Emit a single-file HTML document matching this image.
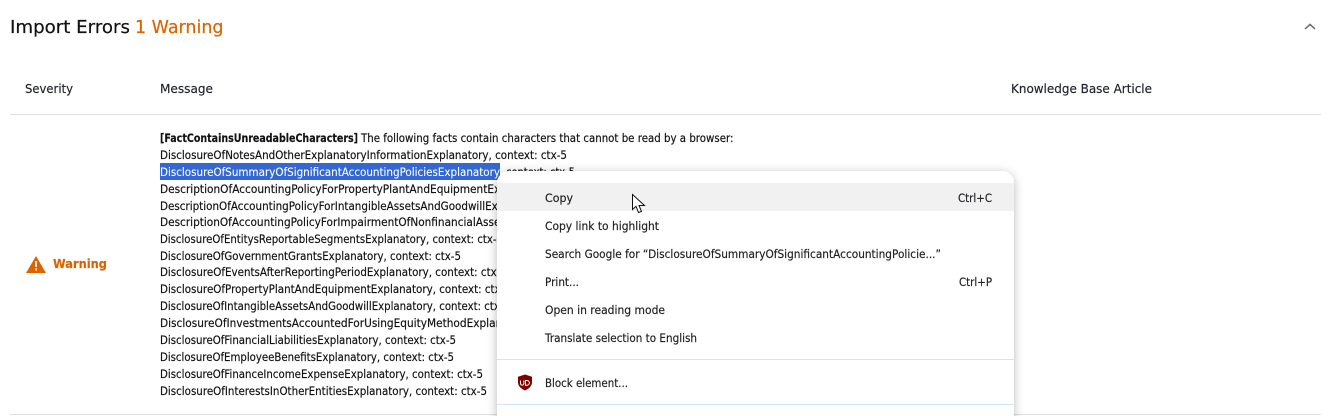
<!DOCTYPE html>
<html><head><meta charset="utf-8"><style>
html,body{margin:0;padding:0;background:#fff;width:1332px;height:416px;overflow:hidden}
svg{display:block}
text{font-family:"DejaVu Sans","Liberation Sans",sans-serif;fill:#111114;stroke:#111114;stroke-width:.18px}
.m{font-size:11.6px}
.h{font-size:12.6px;fill:#1f232b;stroke:#1f232b}
.c{font-size:11.6px;fill:#222226;stroke:#222226}
.o{fill:#dc6300;stroke:#dc6300}
.w{fill:#fff;stroke:#fff;stroke-width:.1px}
</style></head><body>
<svg width="1332" height="416" viewBox="0 0 1332 416" xmlns="http://www.w3.org/2000/svg">
<defs>
<filter id="s" x="-10%" y="-10%" width="120%" height="120%"><feDropShadow dx="0" dy="2" stdDeviation="5" flood-color="#000" flood-opacity=".28"/></filter>
</defs>
<text x="10" y="33" font-size="17.7" textLength="120" lengthAdjust="spacingAndGlyphs">Import Errors</text>
<text class="o" x="135" y="33" font-size="17.7" textLength="88.500" lengthAdjust="spacingAndGlyphs">1 Warning</text>
<path d="M1305 29l5-4.600 5 4.600" fill="none" stroke="#6b6b6b" stroke-width="1.500"/>
<text class="h" x="25" y="93" textLength="48" lengthAdjust="spacingAndGlyphs">Severity</text>
<text class="h" x="160" y="93" textLength="53" lengthAdjust="spacingAndGlyphs">Message</text>
<text class="h" x="1011" y="93" textLength="141" lengthAdjust="spacingAndGlyphs">Knowledge Base Article</text>
<rect x="10" y="114" width="1311" height="1" fill="#e0e0e0"/>
<rect x="10" y="414" width="1311" height="1" fill="#e0e0e0"/>
<path d="M36 256L46 273H26Z" fill="#dc6300"/>
<rect x="35.200" y="261" width="1.700" height="6" fill="#fff"/><rect x="35.200" y="268.500" width="1.700" height="2" fill="#fff"/>
<text class="o" x="53" y="268" font-size="12.600" font-weight="bold" textLength="54" lengthAdjust="spacingAndGlyphs">Warning</text>
<text class="m" x="160" y="142" font-weight="bold" textLength="198" lengthAdjust="spacingAndGlyphs">[FactContainsUnreadableCharacters]</text>
<text class="m" x="361" y="142" textLength="372.500" lengthAdjust="spacingAndGlyphs">The following facts contain characters that cannot be read by a browser:</text>
<text class="m" x="160" y="159" textLength="407" lengthAdjust="spacingAndGlyphs">DisclosureOfNotesAndOtherExplanatoryInformationExplanatory, context: ctx-5</text>
<rect x="160" y="163" width="340" height="17" fill="#3367d1"/>
<text class="m w" x="160" y="176" textLength="340" lengthAdjust="spacingAndGlyphs">DisclosureOfSummaryOfSignificantAccountingPoliciesExplanatory</text>
<text class="m" x="506" y="176" textLength="69" lengthAdjust="spacingAndGlyphs">context: ctx-5</text>
<text class="m" x="160" y="193" textLength="471" lengthAdjust="spacingAndGlyphs">DescriptionOfAccountingPolicyForPropertyPlantAndEquipmentExplanatory, context: ctx-5</text>
<text class="m" x="160" y="210" textLength="466" lengthAdjust="spacingAndGlyphs">DescriptionOfAccountingPolicyForIntangibleAssetsAndGoodwillExplanatory, context: ctx-5</text>
<text class="m" x="160" y="226" textLength="493" lengthAdjust="spacingAndGlyphs">DescriptionOfAccountingPolicyForImpairmentOfNonfinancialAssetsExplanatory, context: ctx-5</text>
<text class="m" x="160" y="243" textLength="343" lengthAdjust="spacingAndGlyphs">DisclosureOfEntitysReportableSegmentsExplanatory, context: ctx-5</text>
<text class="m" x="160" y="260" textLength="301" lengthAdjust="spacingAndGlyphs">DisclosureOfGovernmentGrantsExplanatory, context: ctx-5</text>
<text class="m" x="160" y="276" textLength="347" lengthAdjust="spacingAndGlyphs">DisclosureOfEventsAfterReportingPeriodExplanatory, context: ctx-5</text>
<text class="m" x="160" y="293" textLength="351" lengthAdjust="spacingAndGlyphs">DisclosureOfPropertyPlantAndEquipmentExplanatory, context: ctx-5</text>
<text class="m" x="160" y="310" textLength="350" lengthAdjust="spacingAndGlyphs">DisclosureOfIntangibleAssetsAndGoodwillExplanatory, context: ctx-5</text>
<text class="m" x="160" y="327" textLength="450" lengthAdjust="spacingAndGlyphs">DisclosureOfInvestmentsAccountedForUsingEquityMethodExplanatory, context: ctx-5</text>
<text class="m" x="160" y="344" textLength="296" lengthAdjust="spacingAndGlyphs">DisclosureOfFinancialLiabilitiesExplanatory, context: ctx-5</text>
<text class="m" x="160" y="361" textLength="294" lengthAdjust="spacingAndGlyphs">DisclosureOfEmployeeBenefitsExplanatory, context: ctx-5</text>
<text class="m" x="160" y="378" textLength="323" lengthAdjust="spacingAndGlyphs">DisclosureOfFinanceIncomeExpenseExplanatory, context: ctx-5</text>
<text class="m" x="160" y="395" textLength="327" lengthAdjust="spacingAndGlyphs">DisclosureOfInterestsInOtherEntitiesExplanatory, context: ctx-5</text>
<path d="M497 430V183a12 12 0 0 1 12-12H1002a12 12 0 0 1 12 12V430Z" fill="#fff" filter="url(#s)"/>
<rect x="497" y="183" width="517" height="28" fill="#f1f1f1"/>
<text class="c" x="545" y="202" textLength="28" lengthAdjust="spacingAndGlyphs">Copy</text>
<text class="c" x="958" y="202" textLength="34" lengthAdjust="spacingAndGlyphs">Ctrl+C</text>
<text class="c" x="545" y="230" textLength="114" lengthAdjust="spacingAndGlyphs">Copy link to highlight</text>
<text class="c" x="545" y="258" textLength="396" lengthAdjust="spacingAndGlyphs">Search Google for “DisclosureOfSummaryOfSignificantAccountingPolicie...”</text>
<text class="c" x="545" y="286" textLength="34" lengthAdjust="spacingAndGlyphs">Print...</text>
<text class="c" x="959" y="286" textLength="33" lengthAdjust="spacingAndGlyphs">Ctrl+P</text>
<text class="c" x="545" y="314" textLength="120" lengthAdjust="spacingAndGlyphs">Open in reading mode</text>
<text class="c" x="545" y="342" textLength="152" lengthAdjust="spacingAndGlyphs">Translate selection to English</text>
<rect x="497" y="359" width="517" height="1" fill="#d3e3fd"/>
<rect x="497" y="404" width="517" height="1" fill="#d3e3fd"/>
<path d="M525 374.500L532 376.800V382C532 386 529 388.800 525 390.500C521 388.800 518 386 518 382V376.800Z" fill="#800000"/>
<path d="M520.500 380.500V383.500a1.700 1.700 0 0 0 3.400 0V380.500M525.500 380.500V385.200H527a2.300 2.300 0 0 0 0-4.700Z" fill="none" stroke="#fff" stroke-width="1"/>
<text class="c" x="545" y="387" textLength="83" lengthAdjust="spacingAndGlyphs">Block element...</text>
<path d="M632.500 194.500V209.500L636 206.300L638.500 212.500L641.500 211.500L639 205.500H644.500Z" fill="#fff" stroke="#111" stroke-width="1"/>
</svg>
</body></html>
